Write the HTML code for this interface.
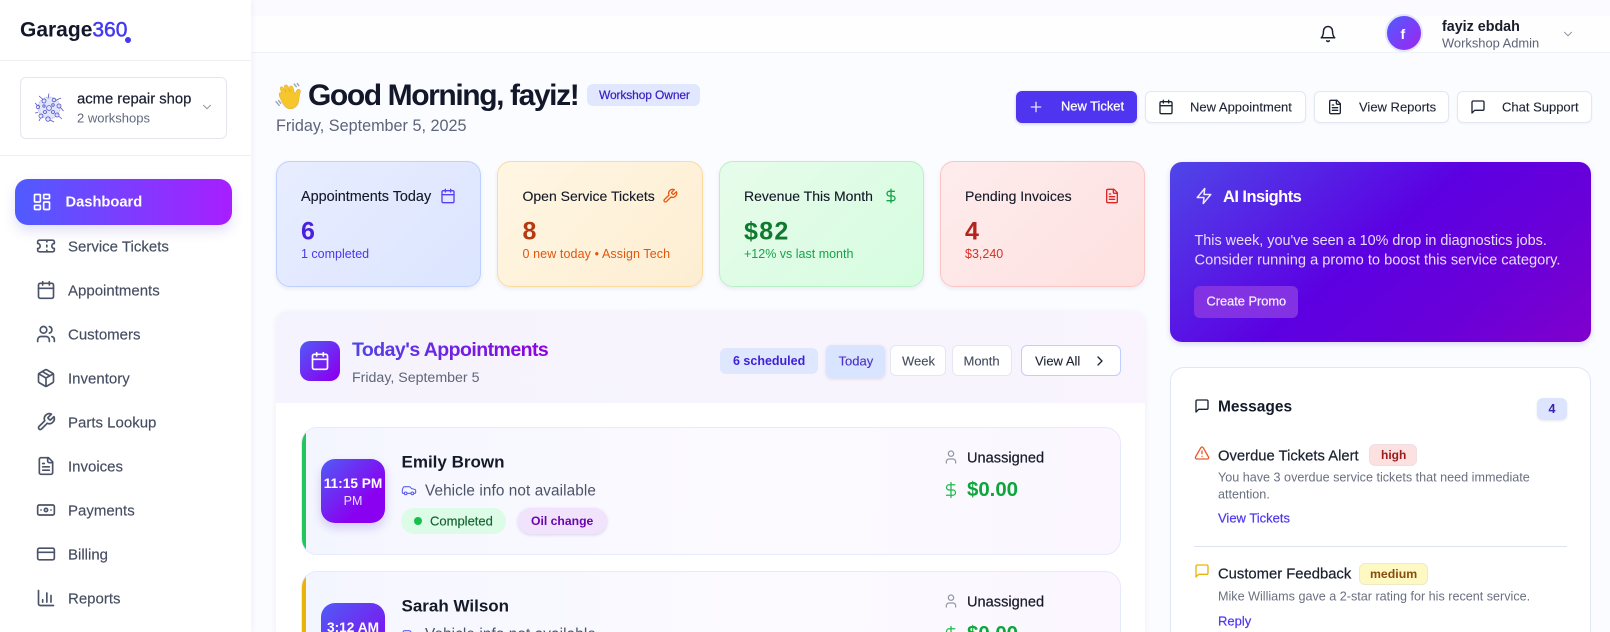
<!DOCTYPE html>
<html lang="en">
<head>
<meta charset="utf-8">
<title>Garage360 Dashboard</title>
<style>
*{box-sizing:border-box;margin:0;padding:0}
html,body{width:1610px;height:632px;overflow:hidden;background:#fbfcff;font-family:"Liberation Sans",Arial,sans-serif;color:#111827}
#app{position:relative;width:1610px;height:632px;overflow:clip}
.a{position:absolute}
.t{position:absolute;white-space:nowrap;line-height:1;transform:translateY(-50%)}
.c{position:absolute;white-space:nowrap;overflow:hidden}
.b{font-weight:700}
.m{-webkit-text-stroke:.22px currentColor}
svg.i{position:absolute;fill:none;stroke:currentColor;stroke-width:2;stroke-linecap:round;stroke-linejoin:round;overflow:visible}
.sidebar{position:absolute;left:0;top:0;width:251px;height:632px;background:#fff;box-shadow:1px 0 6px rgba(90,90,160,.07)}
.nav{font-size:15px;color:#454d60;-webkit-text-stroke:.15px currentColor}
.navi{color:#4b5367}
.stat{position:absolute;top:161px;height:126px;border-radius:14px;border:1px solid;box-shadow:0 2px 5px rgba(60,60,120,.09)}
.st{font-size:14px;top:196px;color:#131827;-webkit-text-stroke:.12px currentColor}
.sn{font-size:25px;font-weight:700;top:232px;letter-spacing:1.3px}
.ss{font-size:12.5px;top:253.5px}
.btn{position:absolute;top:91px;height:32px;background:#fff;border:1px solid #e4e7f2;border-radius:6px;box-shadow:0 1px 2px rgba(60,60,120,.05)}
.bt{font-size:13px;top:107px;color:#1d2433;-webkit-text-stroke:.12px currentColor}
.row{position:absolute;left:301px;width:820px;height:128px;border:1px solid #e6ebfb;border-radius:16px;background:linear-gradient(90deg,#f4f6ff 0%,#fcfaff 55%,#fbf6ff 100%);overflow:hidden}
.bar{position:absolute;left:-1px;top:-1px;bottom:-1px;width:5px}
.time{position:absolute;left:321px;width:64px;height:64px;border-radius:14px;background:linear-gradient(135deg,#4f5cf5,#8a00f0 70%);box-shadow:0 5px 10px rgba(90,50,200,.22)}
.tab{position:absolute;top:345px;height:31px;background:#fff;border:1px solid #e4e7f2;border-radius:6px}
.tb{font-size:13px;top:361px;color:#454d60;-webkit-text-stroke:.12px currentColor}
</style>
</head>
<body>
<div id="app">
<svg width="0" height="0" style="position:absolute">
<defs>
<linearGradient id="lg" x1="0" y1="0" x2="1" y2="0"><stop offset="0" stop-color="#4f46e5"/><stop offset="1" stop-color="#9000e0"/></linearGradient>
<symbol id="dash" viewBox="0 0 24 24"><rect x="3" y="3" width="7" height="9" rx="1"/><rect x="14" y="3" width="7" height="5" rx="1"/><rect x="14" y="12" width="7" height="9" rx="1"/><rect x="3" y="16" width="7" height="5" rx="1"/></symbol>
<symbol id="ticket" viewBox="0 0 24 24"><path d="M2 9a3 3 0 0 1 0 6v2a2 2 0 0 0 2 2h16a2 2 0 0 0 2-2v-2a3 3 0 0 1 0-6V7a2 2 0 0 0-2-2H4a2 2 0 0 0-2 2Z"/><path d="M13 5v2M13 17v2M13 11v2"/></symbol>
<symbol id="cal" viewBox="0 0 24 24"><path d="M8 2v4M16 2v4"/><rect x="3" y="4" width="18" height="18" rx="2"/><path d="M3 10h18"/></symbol>
<symbol id="users" viewBox="0 0 24 24"><path d="M16 21v-2a4 4 0 0 0-4-4H6a4 4 0 0 0-4 4v2"/><circle cx="9" cy="7" r="4"/><path d="M22 21v-2a4 4 0 0 0-3-3.87M16 3.13a4 4 0 0 1 0 7.75"/></symbol>
<symbol id="pkg" viewBox="0 0 24 24"><path d="m7.5 4.27 9 5.15"/><path d="M21 8a2 2 0 0 0-1-1.73l-7-4a2 2 0 0 0-2 0l-7 4A2 2 0 0 0 3 8v8a2 2 0 0 0 1 1.73l7 4a2 2 0 0 0 2 0l7-4A2 2 0 0 0 21 16Z"/><path d="m3.3 7 8.7 5 8.7-5M12 22V12"/></symbol>
<symbol id="wrench" viewBox="0 0 24 24"><path d="M14.7 6.3a1 1 0 0 0 0 1.4l1.6 1.6a1 1 0 0 0 1.4 0l3.77-3.77a6 6 0 0 1-7.94 7.94l-6.91 6.91a2.12 2.12 0 0 1-3-3l6.91-6.91a6 6 0 0 1 7.94-7.94l-3.76 3.76z"/></symbol>
<symbol id="file" viewBox="0 0 24 24"><path d="M15 2H6a2 2 0 0 0-2 2v16a2 2 0 0 0 2 2h12a2 2 0 0 0 2-2V7Z"/><path d="M14 2v4a2 2 0 0 0 2 2h4M10 9H8M16 13H8M16 17H8"/></symbol>
<symbol id="bank" viewBox="0 0 24 24"><rect x="2" y="6" width="20" height="12" rx="2"/><circle cx="12" cy="12" r="2"/><path d="M6 12h.01M18 12h.01"/></symbol>
<symbol id="card" viewBox="0 0 24 24"><rect x="2" y="5" width="20" height="14" rx="2"/><path d="M2 10h20"/></symbol>
<symbol id="chart" viewBox="0 0 24 24"><path d="M3 3v16a2 2 0 0 0 2 2h16"/><path d="M8 17v-3M13 17V6M18 17V9"/></symbol>
<symbol id="bell" viewBox="0 0 24 24"><path d="M6 8a6 6 0 0 1 12 0c0 7 3 9 3 9H3s3-2 3-9"/><path d="M10.3 21a1.94 1.94 0 0 0 3.4 0"/></symbol>
<symbol id="cd" viewBox="0 0 24 24"><path d="m6 9 6 6 6-6"/></symbol>
<symbol id="cr" viewBox="0 0 24 24"><path d="m9 18 6-6-6-6"/></symbol>
<symbol id="plus" viewBox="0 0 24 24"><path d="M5 12h14M12 5v14"/></symbol>
<symbol id="msg" viewBox="0 0 24 24"><path d="M21 15a2 2 0 0 1-2 2H7l-4 4V5a2 2 0 0 1 2-2h14a2 2 0 0 1 2 2z"/></symbol>
<symbol id="zap" viewBox="0 0 24 24"><path d="M13 2 3 14h9l-1 8 10-12h-9l1-8z"/></symbol>
<symbol id="usd" viewBox="0 0 24 24"><path d="M12 2v20M17 5H9.5a3.5 3.5 0 0 0 0 7h5a3.5 3.5 0 0 1 0 7H6"/></symbol>
<symbol id="warn" viewBox="0 0 24 24"><path d="m21.73 18-8-14a2 2 0 0 0-3.48 0l-8 14A2 2 0 0 0 4 21h16a2 2 0 0 0 1.73-3"/><path d="M12 9v4M12 17h.01"/></symbol>
<symbol id="user" viewBox="0 0 24 24"><path d="M19 21v-2a4 4 0 0 0-4-4H9a4 4 0 0 0-4 4v2"/><circle cx="12" cy="7" r="4"/></symbol>
<symbol id="car" viewBox="0 0 24 24"><path d="M19 17h2c.6 0 1-.4 1-1v-3c0-.9-.7-1.7-1.5-1.9C18.7 10.6 16 10 16 10s-1.3-1.4-2.2-2.3c-.5-.4-1.1-.7-1.8-.7H5c-.6 0-1.1.4-1.4.9l-1.4 2.9A3.7 3.7 0 0 0 2 12v4c0 .6.4 1 1 1h2"/><circle cx="7" cy="17" r="2"/><path d="M9 17h6"/><circle cx="17" cy="17" r="2"/></symbol>
</defs>
</svg>

<!-- top bar -->
<div class="a" style="left:251px;top:0;width:1359px;height:53px;background:linear-gradient(#fafaff 0,#fafaff 15px,#fefeff 16px);border-bottom:1.5px solid #f0f1f7"></div>
<svg class="i" style="left:1319px;top:25px;color:#1b2130" width="18" height="18"><use href="#bell"/></svg>
<div class="a" style="left:1385px;top:14px;width:38px;height:38px;border-radius:50%;background:linear-gradient(135deg,#4f5cff,#a024f0);border:2px solid #e0e6fb"></div>
<div class="t b" style="left:1400.5px;top:34px;font-size:14px;color:#fff">f</div>
<div class="t b" style="left:1442px;top:26.5px;font-size:14.3px;color:#171c2b">fayiz ebdah</div>
<div class="t" style="left:1442px;top:44px;font-size:12.9px;color:#5d6476">Workshop Admin</div>
<svg class="i" style="left:1561px;top:26px;color:#8e95a6;stroke-width:1.8" width="14" height="16"><use href="#cd"/></svg>

<!-- sidebar -->
<aside class="sidebar">
<div class="t b" style="left:20px;top:30px;font-size:21px;color:#12172a">Garage<span style="color:#4338f5;font-weight:400;-webkit-text-stroke:.5px #4338f5">360</span></div>
<div class="a" style="left:124.5px;top:37px;width:6px;height:6px;border-radius:50%;background:#4338f5"></div>
<div class="a" style="left:0;top:60px;width:251px;height:1px;background:#eef0f4"></div>
<div class="a" style="left:20px;top:77px;width:207px;height:62px;border:1px solid #e4e6ee;border-radius:6px"></div>
<svg class="a" style="left:33px;top:92px" width="32" height="32" viewBox="0 0 32 32" fill="none" stroke="#5650c4" stroke-width=".8">
<circle cx="16" cy="16" r="11" fill="#dfe6fb" stroke="#a8aeea" stroke-dasharray="1.2 1"/>
<circle cx="11" cy="9" r="2"/><circle cx="21" cy="8" r="1.8"/><circle cx="26" cy="14" r="2"/><circle cx="24" cy="23" r="2"/><circle cx="15" cy="27" r="2.2"/><circle cx="8" cy="24" r="2"/><circle cx="5" cy="15" r="1.7"/>
<circle cx="16" cy="16" r="2.4"/><circle cx="12" cy="20" r="1.5"/><circle cx="20" cy="13" r="1.3"/><circle cx="11" cy="14" r="1.2"/><circle cx="20" cy="20" r="1.5"/>
<path d="M2 11l2.500 2.500M6 4l4 3.500M16 1.500l-1 5M28 6l-5.500 2.500M30.500 19l-3-3.500M29 27l-3.500-3M21 30l-4-2M6 29l1.500-3M2 21l3-.5" stroke="#5a52c4"/>
</svg>
<div class="t m" style="left:77px;top:100px;font-size:14.8px;color:#1a2030">acme repair shop</div>
<div class="t" style="left:77px;top:118px;font-size:13px;color:#626a7c">2 workshops</div>
<svg class="i" style="left:200px;top:99px;color:#8e95a6;stroke-width:1.8" width="14" height="16"><use href="#cd"/></svg>
<div class="a" style="left:0;top:155px;width:251px;height:1px;background:#eef0f4"></div>

<div class="a" style="left:15px;top:179px;width:217px;height:46px;border-radius:13px;background:linear-gradient(90deg,#4f5cff,#a81eff);box-shadow:0 6px 12px rgba(80,70,200,.16)"></div>
<svg class="i" style="left:32px;top:192px;color:#fff" width="20" height="20"><use href="#dash"/></svg>
<div class="t b" style="left:65.5px;top:202.5px;font-size:14.7px;color:#fff">Dashboard</div>

<svg class="i navi" style="left:36px;top:236px" width="20" height="20"><use href="#ticket"/></svg><div class="t nav" style="left:68px;top:246.5px">Service Tickets</div>
<svg class="i navi" style="left:36px;top:280px" width="20" height="20"><use href="#cal"/></svg><div class="t nav" style="left:68px;top:290.5px">Appointments</div>
<svg class="i navi" style="left:36px;top:324px" width="20" height="20"><use href="#users"/></svg><div class="t nav" style="left:68px;top:334.5px">Customers</div>
<svg class="i navi" style="left:36px;top:368px" width="20" height="20"><use href="#pkg"/></svg><div class="t nav" style="left:68px;top:378.5px">Inventory</div>
<svg class="i navi" style="left:36px;top:412px" width="20" height="20"><use href="#wrench"/></svg><div class="t nav" style="left:68px;top:422.5px">Parts Lookup</div>
<svg class="i navi" style="left:36px;top:456px" width="20" height="20"><use href="#file"/></svg><div class="t nav" style="left:68px;top:466.5px">Invoices</div>
<svg class="i navi" style="left:36px;top:500px" width="20" height="20"><use href="#bank"/></svg><div class="t nav" style="left:68px;top:510.5px">Payments</div>
<svg class="i navi" style="left:36px;top:544px" width="20" height="20"><use href="#card"/></svg><div class="t nav" style="left:68px;top:554.5px">Billing</div>
<svg class="i navi" style="left:36px;top:588px" width="20" height="20"><use href="#chart"/></svg><div class="t nav" style="left:68px;top:598.5px">Reports</div>
</aside>

<!-- greeting -->
<svg class="a" style="left:274px;top:81.5px" width="29" height="29" viewBox="0 0 28 28">
<g stroke="#d99a10" stroke-width=".4" fill="#f6c72c">
<path d="M6 15.5 C4 11 5 9 7.5 11 L6 6.5 C5.5 4 8.5 4 9.5 6 L11.5 10 L10 4.5 C9.5 2.5 12.5 2 13.5 4 L15.5 9.5 L15 5.5 C14.5 3.500 17.5 3 18.3 5 L20 11.5 L22 8 C23 6 26 7 25.5 9.5 C24 14 24.5 16 23.5 20 C22 25.5 15.5 27.5 11.5 24.5 C9 22.5 7.5 19 6 15.5Z"/>
</g>
<path d="M19.5 2 L21.5 4.500 M22.5 1.5 L24 3.500" stroke="#9aa3b4" stroke-width="1.4" stroke-linecap="round"/>
<path d="M2 19 L5 22.500 M4.5 18 L6.500 20.500" stroke="#9aa3b4" stroke-width="1.4" stroke-linecap="round"/>
</svg>
<div class="t b" style="left:308px;top:95.5px;font-size:30px;letter-spacing:-1.4px;color:#12172a">Good Morning, fayiz!</div>
<div class="a" style="left:587px;top:84px;width:113px;height:22px;background:#e0e7ff;border-radius:6px"></div>
<div class="t m" style="left:599px;top:95px;font-size:12px;letter-spacing:-.12px;color:#3a1fc0">Workshop Owner</div>
<div class="t" style="left:276px;top:125.5px;font-size:16.2px;color:#5c6579">Friday, September 5, 2025</div>

<!-- action buttons -->
<div class="a" style="left:1016px;top:91px;width:121px;height:32px;background:#4f35f0;border-radius:6px;box-shadow:0 1px 3px rgba(60,50,200,.25)"></div>
<svg class="i" style="left:1028px;top:99px;color:#e4e2ff" width="16" height="16"><use href="#plus"/></svg>
<div class="t" style="left:1061px;top:107px;font-size:12.9px;color:#fff;-webkit-text-stroke:.25px #fff">New Ticket</div>
<div class="btn" style="left:1145px;width:161px"></div>
<svg class="i" style="left:1158px;top:99px;color:#1d2433" width="16" height="16"><use href="#cal"/></svg>
<div class="t bt" style="left:1190px">New Appointment</div>
<div class="btn" style="left:1314px;width:135px"></div>
<svg class="i" style="left:1327px;top:99px;color:#1d2433" width="16" height="16"><use href="#file"/></svg>
<div class="t bt" style="left:1359px">View Reports</div>
<div class="btn" style="left:1457px;width:135px"></div>
<svg class="i" style="left:1470px;top:99px;color:#1d2433" width="16" height="16"><use href="#msg"/></svg>
<div class="t bt" style="left:1502px">Chat Support</div>

<!-- stat cards -->
<div class="stat" style="left:276px;width:205px;background:linear-gradient(135deg,#e8edff,#dce5ff);border-color:#bfd0ff"></div>
<div class="t st" style="left:301px;top:196.5px;font-size:14.4px">Appointments Today</div>
<svg class="i" style="left:440px;top:188px;color:#5a3df5" width="16" height="16"><use href="#cal"/></svg>
<div class="t sn" style="left:301px;color:#4a1fe0">6</div>
<div class="t ss" style="left:301px;color:#4f35f0">1 completed</div>

<div class="stat" style="left:497px;width:206px;background:linear-gradient(135deg,#fff6e3,#fdeed2);border-color:#fcdb9e"></div>
<div class="t st" style="left:522.5px">Open Service Tickets</div>
<svg class="i" style="left:662px;top:188px;color:#ea580c" width="16" height="16"><use href="#wrench"/></svg>
<div class="t sn" style="left:522.5px;color:#b53a12">8</div>
<div class="t ss" style="left:522.5px;letter-spacing:.1px;color:#e2550d">0 new today • Assign Tech</div>

<div class="stat" style="left:719px;width:205px;background:linear-gradient(135deg,#e6fcea,#d6fde0);border-color:#b8f0c8"></div>
<div class="t st" style="left:744px">Revenue This Month</div>
<svg class="i" style="left:883px;top:188px;color:#16a34a" width="16" height="16"><use href="#usd"/></svg>
<div class="t sn" style="left:744px;color:#0f7a2e">$82</div>
<div class="t ss" style="left:744px;color:#16a34a">+12% vs last month</div>

<div class="stat" style="left:940px;width:205px;background:linear-gradient(135deg,#feecec,#fee0e0);border-color:#fcc5c5"></div>
<div class="t st" style="left:965px">Pending Invoices</div>
<svg class="i" style="left:1104px;top:188px;color:#dc2626" width="16" height="16"><use href="#file"/></svg>
<div class="t sn" style="left:965px;color:#b3241c">4</div>
<div class="t ss" style="left:965px;color:#d93025">$3,240</div>

<!-- appointments panel -->
<div class="a" style="left:276px;top:311px;width:869px;height:321px;background:#fff;border-radius:12px 12px 0 0;box-shadow:0 1px 6px rgba(60,60,120,.07)"></div>
<div class="a" style="left:276px;top:311px;width:869px;height:92px;border-radius:12px 12px 0 0;background:linear-gradient(90deg,#f5f3fd,#f9f4fd)"></div>
<div class="a" style="left:300px;top:341px;width:40px;height:40px;border-radius:10px;background:linear-gradient(135deg,#4f5cf5,#8a00f0 90%)"></div>
<svg class="i" style="left:310px;top:351px;color:#fff" width="20" height="20"><use href="#cal"/></svg>
<svg class="a" style="left:350px;top:336px;overflow:visible" width="210" height="28"><text x="2" y="20" font-family="'Liberation Sans',Arial,sans-serif" font-size="19.5" font-weight="700" letter-spacing="-.55" fill="url(#lg)">Today's Appointments</text></svg>
<div class="t" style="left:352px;top:377.5px;font-size:14.2px;color:#5f6678">Friday, September 5</div>

<div class="a" style="left:720px;top:348px;width:98px;height:26px;background:#dfe7ff;border-radius:6px"></div>
<div class="t b" style="left:733px;top:361px;font-size:12.5px;color:#4020d8">6 scheduled</div>
<div class="a" style="left:826px;top:345px;width:59px;height:33px;background:#d9e4fe;border-radius:6px;box-shadow:0 1px 3px rgba(60,60,140,.15)"></div>
<div class="t tb" style="left:838.5px;color:#4a2fc8">Today</div>
<div class="tab" style="left:890px;width:56px"></div>
<div class="t tb" style="left:902px">Week</div>
<div class="tab" style="left:952px;width:60px"></div>
<div class="t tb" style="left:963.5px">Month</div>
<div class="tab" style="left:1021px;width:100px;border-color:#bdd0fb"></div>
<div class="t bt" style="left:1035px;top:361px">View All</div>
<svg class="i" style="left:1092px;top:353px;color:#1d2433" width="16" height="16"><use href="#cr"/></svg>

<!-- row 1 -->
<div class="row" style="top:427px"><div class="bar" style="background:#22c55e"></div></div>
<div class="time" style="top:459px"></div>
<div class="t b" style="left:353px;top:483.5px;font-size:13.7px;color:#fff;transform:translate(-50%,-50%)">11:15 PM</div>
<div class="t" style="left:353px;top:501px;font-size:12.5px;color:#eadfff;transform:translate(-50%,-50%)">PM</div>
<div class="t b" style="left:401.5px;top:461.5px;font-size:17px;color:#151a28">Emily Brown</div>
<svg class="i" style="left:401px;top:482px;color:#5a5cf0;stroke-width:1.6" width="16" height="16"><use href="#car"/></svg>
<div class="t" style="left:425px;top:490.5px;font-size:15.3px;letter-spacing:.1px;color:#4c5366">Vehicle info not available</div>
<div class="a" style="left:401px;top:508px;width:105px;height:26px;border-radius:13px;background:#dcfce7"></div>
<div class="a" style="left:414px;top:517px;width:8px;height:8px;border-radius:50%;background:#16c04a"></div>
<div class="t" style="left:430px;top:521px;font-size:13px;color:#14632f;-webkit-text-stroke:.15px currentColor">Completed</div>
<div class="a" style="left:518px;top:508px;width:89px;height:26px;border-radius:13px;background:#f1e3fb;box-shadow:0 1px 3px rgba(90,50,160,.2)"></div>
<div class="t b" style="left:531px;top:521px;font-size:12.2px;color:#6b05b0">Oil change</div>
<svg class="i" style="left:943px;top:449px;color:#8f96a6;stroke-width:1.8" width="16" height="16"><use href="#user"/></svg>
<div class="t m" style="left:967px;top:458.5px;font-size:14.6px;color:#171c2b">Unassigned</div>
<svg class="i" style="left:942px;top:481px;color:#22b84f;stroke-width:1.7" width="18" height="18"><use href="#usd"/></svg>
<div class="t b" style="left:967px;top:490px;font-size:20.4px;color:#0ea63c">$0.00</div>

<!-- row 2 (cut by the bottom of the viewport) -->
<div class="row" style="top:571px;height:61px;border-bottom:0;border-radius:16px 16px 0 0"><div class="bar" style="background:#eab308"></div></div>
<div class="time" style="top:603px;height:29px;border-radius:14px 14px 0 0;background:linear-gradient(135deg,#4f5cf5 0,#7620f0 90%);box-shadow:none"></div>
<div class="c b" style="left:321px;width:64px;top:620.6px;height:11.4px;line-height:13.7px;font-size:13.7px;color:#fff;text-align:center">3:12 AM</div>
<div class="t b" style="left:401.5px;top:605.5px;font-size:17px;color:#151a28">Sarah Wilson</div>
<svg class="i" style="left:401px;top:626px;color:#5a5cf0;stroke-width:1.6;overflow:hidden" width="16" height="6"><use href="#car" width="16" height="16"/></svg>
<div class="c" style="left:425px;top:626.8px;height:5.2px;line-height:15.3px;font-size:15.3px;letter-spacing:.1px;color:#4c5366">Vehicle info not available</div>
<svg class="i" style="left:943px;top:593px;color:#8f96a6;stroke-width:1.8" width="16" height="16"><use href="#user"/></svg>
<div class="t m" style="left:967px;top:602.5px;font-size:14.6px;color:#171c2b">Unassigned</div>
<svg class="i" style="left:942px;top:625px;color:#22b84f;stroke-width:1.7;overflow:hidden" width="18" height="7"><use href="#usd" width="18" height="18"/></svg>
<div class="c b" style="left:967px;top:623.8px;height:8.2px;line-height:20.4px;font-size:20.4px;color:#0ea63c">$0.00</div>

<!-- AI insights -->
<div class="a" style="left:1170px;top:162px;width:421px;height:180px;border-radius:12px;background:linear-gradient(140deg,#4f46e8 0%,#5c00e2 48%,#6a00d8 75%,#8000cc 100%);box-shadow:0 2px 6px rgba(70,40,180,.18)"></div>
<svg class="i" style="left:1195px;top:186px;color:#f0eaff" width="18" height="20"><use href="#zap"/></svg>
<div class="t b" style="left:1223px;top:196.5px;font-size:16.5px;letter-spacing:-.55px;color:#fff">AI Insights</div>
<div class="t" style="left:1194.5px;top:240.5px;font-size:14.4px;color:#e8dcfb">This week, you've seen a 10% drop in diagnostics jobs.</div>
<div class="t" style="left:1194.5px;top:260.5px;font-size:14.65px;color:#e8dcfb">Consider running a promo to boost this service category.</div>
<div class="a" style="left:1194px;top:286px;width:104px;height:32px;border-radius:6px;background:#8232e2"></div>
<div class="t" style="left:1206.5px;top:302px;font-size:12.8px;color:#f3ebff;-webkit-text-stroke:.25px currentColor">Create Promo</div>

<!-- messages -->
<div class="a" style="left:1170px;top:367px;width:421px;height:265px;background:#fff;border:1px solid #e2e5f4;border-bottom:0;border-radius:14px 14px 0 0"></div>
<svg class="i" style="left:1194px;top:398px;color:#1a2030" width="16" height="16"><use href="#msg"/></svg>
<div class="t b" style="left:1218px;top:406.5px;font-size:15.5px;color:#151a28">Messages</div>
<div class="a" style="left:1537px;top:398px;width:30px;height:22px;border-radius:6px;background:#dde5fe;box-shadow:0 1px 2px rgba(60,60,140,.12)"></div>
<div class="t b" style="left:1552px;top:409px;font-size:12.5px;color:#3a1fb0;transform:translate(-50%,-50%)">4</div>

<svg class="i" style="left:1194px;top:445px;color:#ea5a2c" width="16" height="16"><use href="#warn"/></svg>
<div class="t m" style="left:1218px;top:456.5px;font-size:14.8px;color:#1a2030">Overdue Tickets Alert</div>
<div class="a" style="left:1369px;top:444px;width:48px;height:22px;border-radius:6px;background:#fde0e0;border:1px solid #ecdfe6"></div>
<div class="t b" style="left:1381px;top:455px;font-size:12px;color:#991b1b">high</div>
<div class="t" style="left:1218px;top:477.5px;font-size:12.6px;color:#6a7080">You have 3 overdue service tickets that need immediate</div>
<div class="t" style="left:1218px;top:494.5px;font-size:12.6px;color:#6a7080">attention.</div>
<div class="t m" style="left:1218px;top:518px;font-size:13px;color:#5038f0">View Tickets</div>
<div class="a" style="left:1194px;top:546px;width:373px;height:1px;background:#dfe3f0"></div>

<svg class="i" style="left:1194px;top:563px;color:#eab308" width="16" height="16"><use href="#msg"/></svg>
<div class="t m" style="left:1218px;top:575px;font-size:14.8px;color:#1a2030">Customer Feedback</div>
<div class="a" style="left:1359px;top:563px;width:69px;height:22px;border-radius:6px;background:#fef9c3;border:1px solid #ecebc8"></div>
<div class="t b" style="left:1370px;top:574px;font-size:12.3px;color:#854d0e">medium</div>
<div class="t" style="left:1218px;top:596.5px;font-size:12.6px;color:#6a7080">Mike Williams gave a 2-star rating for his recent service.</div>
<div class="t m" style="left:1218px;top:620.5px;font-size:13px;color:#5038f0">Reply</div>
</div>
</body>
</html>
